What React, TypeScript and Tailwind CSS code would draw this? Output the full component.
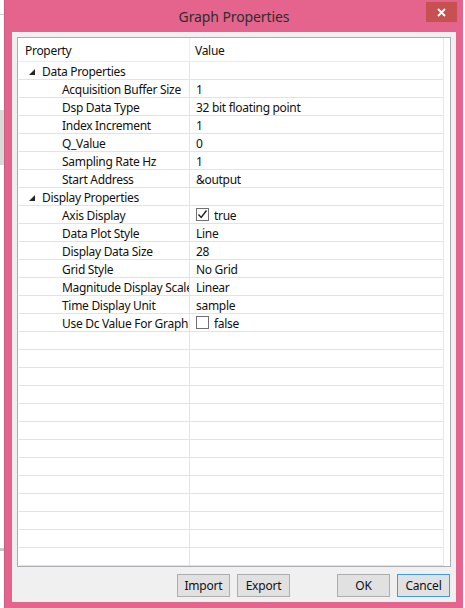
import React from "react";

type Row =
  | { kind: "group"; label: string }
  | { kind: "item"; label: string; value: string; check?: boolean };

const ROWS: Row[] = [
  { kind: "group", label: "Data Properties" },
  { kind: "item", label: "Acquisition Buffer Size", value: "1" },
  { kind: "item", label: "Dsp Data Type", value: "32 bit floating point" },
  { kind: "item", label: "Index Increment", value: "1" },
  { kind: "item", label: "Q_Value", value: "0" },
  { kind: "item", label: "Sampling Rate Hz", value: "1" },
  { kind: "item", label: "Start Address", value: "&output" },
  { kind: "group", label: "Display Properties" },
  { kind: "item", label: "Axis Display", value: "true", check: true },
  { kind: "item", label: "Data Plot Style", value: "Line" },
  { kind: "item", label: "Display Data Size", value: "28" },
  { kind: "item", label: "Grid Style", value: "No Grid" },
  { kind: "item", label: "Magnitude Display Scale", value: "Linear" },
  { kind: "item", label: "Time Display Unit", value: "sample" },
  { kind: "item", label: "Use Dc Value For Graph", value: "false", check: false },
];

const EMPTY = 14;

function Expander() {
  return (
    <svg width="6" height="6" viewBox="0 0 6 6" className="mr-[7px] ml-[10px]">
      <polygon points="6,0 6,6 0,6" fill="#262626" />
    </svg>
  );
}

function CheckBox({ on }: { on: boolean }) {
  return (
    <span className="mr-[5px] flex h-[13px] w-[13px] items-center justify-center border border-[#707070] bg-white">
      {on && (
        <svg width="11" height="11" viewBox="0 0 11 11">
          <path d="M1.5 5.5 L4.2 8.5 L9.5 1.5" stroke="#222" strokeWidth="1.4" fill="none" />
        </svg>
      )}
    </span>
  );
}

function Button({ label, focused }: { label: string; focused?: boolean }) {
  return (
    <button
      className={
        "flex h-[23px] w-[53px] items-center justify-center border bg-[#E1E1E1] text-[12px] tracking-[-0.2px] text-[#111] " +
        (focused ? "border-[#3C9BE8]" : "border-[#ADADAD]")
      }
    >
      {label}
    </button>
  );
}

export default function App() {
  return (
    <div
      className="relative h-[608px] w-[465px] overflow-hidden bg-white"
      style={{ fontFamily: '"Noto Sans", "Open Sans", sans-serif' }}
    >
      {/* backdrop app remnants */}
      <div className="absolute left-0 top-[110px] h-[55px] w-[4px] bg-[#D9D9D9]" />
      <div className="absolute left-0 top-[14px] h-px w-[4px] bg-[#D0D0D0]" />
      <div className="absolute left-0 top-[548px] h-[3px] w-[4px] bg-[#C8C8C8]" />

      <div className="ml-[4px] flex h-full w-[459px] flex-col border-l border-[#CF5A82] bg-[#E5648E]">
        {/* title bar */}
        <div className="relative flex h-[32px] items-center justify-center">
          <span className="text-[14px] tracking-[-0.1px] text-[#2d2d2d]">Graph Properties</span>
          <div className="absolute right-[6px] top-[2px] flex h-[20px] w-[31px] items-center justify-center bg-[#C75050]">
            <svg width="9" height="9" viewBox="0 0 9 9">
              <path d="M1 1 L8 8 M8 1 L1 8" stroke="#fff" strokeWidth="1.8" />
            </svg>
          </div>
        </div>

        {/* client */}
        <div className="ml-[7px] mb-[6px] flex w-[444px] flex-1 flex-col bg-[#F0F0F0] px-[5px] pt-[5px]">
          <div className="flex h-[530px] flex-col border border-[#ABADB3] bg-white">
            <div className="flex">
              <div className="flex w-[426px] flex-col">
                {/* header */}
                <div className="flex h-[24px] border-b border-[#E3ECF7] text-[12px] tracking-[-0.3px] text-[#111]">
                  <div className="flex w-[172px] items-center border-r border-[#EAF0F8] pl-[7px] pt-[3px]">Property</div>
                  <div className="flex flex-1 items-center pl-[5px] pt-[3px]">Value</div>
                </div>
                <div className="h-[504px] overflow-hidden">
                  {ROWS.map((r, i) => (
                    <div key={i} className="flex h-[18px] text-[12px] tracking-[-0.3px] text-[#111]">
                      <div className="ml-px flex w-[171px] items-center overflow-hidden border-b border-r border-[#E3E3E3] pt-[3px]">
                        {r.kind === "group" ? (
                          <>
                            <Expander />
                            <span className="whitespace-nowrap">{r.label}</span>
                          </>
                        ) : (
                          <span className="whitespace-nowrap pl-[43px]">{r.label}</span>
                        )}
                      </div>
                      <div className="flex flex-1 items-center border-b border-[#E3E3E3] pl-[6px] pt-[3px]">
                        {r.kind === "item" && (
                          <>
                            {r.check !== undefined && (
                              <span className="-mt-[3px] flex">
                                <CheckBox on={r.check} />
                              </span>
                            )}
                            <span className="whitespace-nowrap">{r.value}</span>
                          </>
                        )}
                      </div>
                    </div>
                  ))}
                  {Array.from({ length: EMPTY }).map((_, i) => (
                    <div key={"e" + i} className="flex h-[18px]">
                      <div className="ml-px w-[171px] border-b border-r border-[#E3E3E3]" />
                      <div className="flex-1 border-b border-[#E3E3E3]" />
                    </div>
                  ))}
                </div>
              </div>
              <div className="w-[7px] border-l border-[#E8E8E8]" />
            </div>
          </div>

          {/* buttons */}
          <div className="mt-[7px] flex justify-end pr-[1px]">
            <div className="flex gap-[7px]">
              <Button label="Import" />
              <Button label="Export" />
            </div>
            <div className="ml-[47px] flex gap-[7px]">
              <Button label="OK" />
              <Button label="Cancel" focused />
            </div>
          </div>
        </div>
      </div>
    </div>
  );
}
